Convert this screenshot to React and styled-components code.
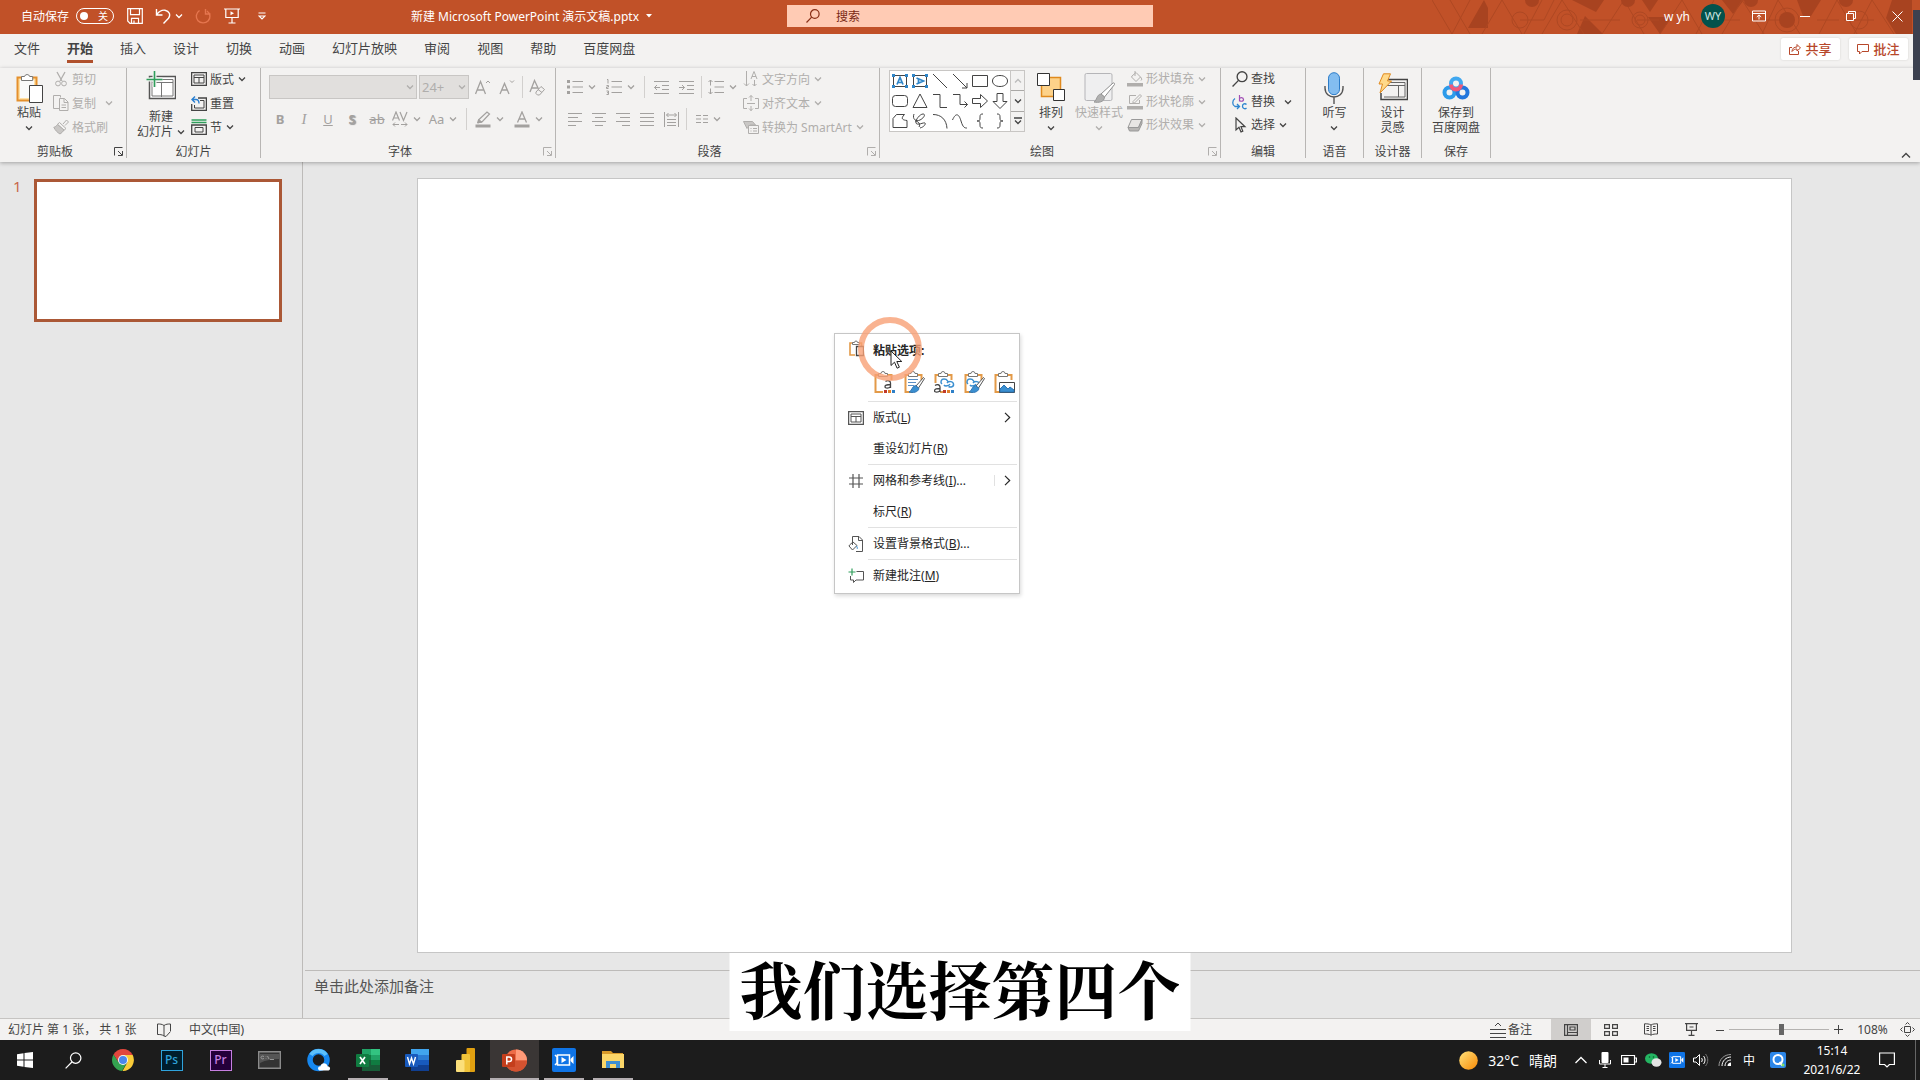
import { useState } from "react";
import styled, { createGlobalStyle, css } from "styled-components";

const INK = "#444444";
const DIM = "#b0aeac";
const BRAND = "#b7472a";

const Svg = ({ w = 16, h = 16, c = "currentColor", sw = 1, box, children }) => (
  <svg
    width={w}
    height={h}
    viewBox={box || `0 0 ${w} ${h}`}
    fill='none'
    stroke={c}
    strokeWidth={sw}
    aria-hidden='true'
  >
    {children}
  </svg>
);

const Chevron = () => (
  <Svg w={8} h={8} sw={1.3}>
    <path d='M1 2.5l3 3 3-3' />
  </Svg>
);

/* title bar icons */
const SaveIcon = () => (
  <Svg w={16} h={16} sw={1.2}>
    <path d='M.7.7h14.6v14.6H3L.7 13zM3.5.7v6h9v-6M4.5 15.3v-5h7v5M7 15v-2.5' />
  </Svg>
);
const UndoIcon = () => (
  <Svg w={16} h={16} sw={1.4}>
    <path d='M1.5 1v6h6M1.8 6.5C4 3.5 7 1.8 10 2.2c4.5.7 5.8 5 3.5 8L8.500 15.5' />
  </Svg>
);
const RedoIcon = () => (
  <Svg w={16} h={16} sw={1.4}>
    <path d='M10.5 1v5h5M12 3c3.5 2.5 4 7 1 10-2.500 2.500-7.500 2.500-10-.2C.3 9.800.8 5 4.500 2.500' />
  </Svg>
);
const PresentIcon = () => (
  <Svg w={16} h={16} sw={1.2}>
    <path d='M0 1h16M1.8 1v8.5h12.4V1M8 9.5V15M4.500 15h7' />
    <path d='M6.5 3.2v4l3.5-2z' fill='currentColor' stroke='none' />
  </Svg>
);
const MoreIcon = () => (
  <Svg w={8} h={8} sw={1.2}>
    <path d='M.5 1h7M1 4h6L4 7z' />
  </Svg>
);
const CaretIcon = () => (
  <Svg w={6} h={4}>
    <path d='M0 0h6L3 3.5z' fill='currentColor' stroke='none' />
  </Svg>
);
const SearchIcon = ({ size = 14, sw = 1.2 }) => (
  <Svg w={size} h={size} box='0 0 14 14' sw={sw}>
    <circle cx='8.8' cy='5' r='4.3' />
    <path d='M5.7 8.2L.5 13.500' />
  </Svg>
);
const RibbonModeIcon = () => (
  <Svg w={14} h={12}>
    <path d='M.5 1h13v10H.5zM.5 3.5h13M7 9.5V5M4.8 7L7 4.900 9.200 7' />
  </Svg>
);
const MinIcon = () => (
  <Svg w={10} h={10}>
    <path d='M0 5.5h10' />
  </Svg>
);
const RestoreIcon = () => (
  <Svg w={10} h={10}>
    <path d='M.5 2.5h7v7h-7zM2.5 2.5v-2h7v7h-2' />
  </Svg>
);
const CloseIcon = () => (
  <Svg w={11} h={11}>
    <path d='M.5.5l10 10M10.5.5l-10 10' />
  </Svg>
);

const Pattern = () => (
  <Svg w={480} h={34} c='#ae4823'>
    <path
      stroke='none'
      fill='#a84320'
      d='M52 0l-8 14-8 14h20V8zM140 0h32l-8 12zM153 16l18 18h-26zM216 17h24l-12 17zM226 0l-8 12-8-12zM290 0h22l-11 14zM365 0h24l-10 16h-8zM460 0h20v34h-16l-10-16z'
    />
    <path d='M0 0l20 34M18 0l20 34M38 0L20 34M70 0L50 34M70 0l20 34M88 20h24M110 0L92 34M112 20l10-20M130 0l-20 34M130 0l22 34M148 20h40M192 0l-22 34M192 0l20 34M205 20h22M250 0l-22 34M250 0l20 34M282 0l-18 34M270 20h38M310 0l-20 34M310 0l22 34M332 20h28M346 0l-16 34M346 0l22 34M385 20h22M405 0l-18 34M405 0l20 34M412 20h30M440 0l-18 34M440 0l22 34' />
    <circle cx='88' cy='20' r='8' />
    <circle cx='135' cy='20' r='10' />
    <circle cx='135' cy='20' r='6' />
    <circle cx='208' cy='20' r='8' />
    <circle cx='208' cy='20' r='5' />
    <circle cx='355' cy='20' r='12' />
    <circle cx='427' cy='20' r='9' />
    <g fill='#a84320' stroke='none'>
      <circle cx='100' cy='0' r='7' />
      <circle cx='196' cy='0' r='7' />
      <circle cx='319' cy='0' r='7' />
      <circle cx='355' cy='20' r='8' />
      <circle cx='414' cy='0' r='7' />
    </g>
  </Svg>
);

/* ribbon icons */
const PasteBig = () => (
  <Svg w={28} h={31}>
    <path d='M2.5 5.5h19v23h-19z' fill='#ffe1a5' stroke='#e5902c' strokeWidth='2' />
    <path d='M5 8h14v18H5z' fill='#fafafa' stroke='none' />
    <path d='M6.5 8.5V4.5h3a2.7 2.7 0 015.2 0h3v4z' fill='#fff' stroke='#777' />
    <path d='M14.5 13.5h13v17h-13z' fill='#fff' stroke='#444' />
  </Svg>
);
const CutIcon = () => (
  <Svg>
    <path d='M4 1l5 9M12 1L7 10' strokeWidth='1.3' />
    <circle cx='5' cy='12.5' r='2.4' />
    <circle cx='11' cy='12.5' r='2.4' />
  </Svg>
);
const CopyIcon = () => (
  <Svg>
    <path d='M6 13.5H.5V.5h7v2M6.5 3.5h5l3.5 3.5v8.5H6.500zM11 3.5v4h4M8.500 10h4.500M8.500 12.500h4.500' />
  </Svg>
);
const BrushIcon = () => (
  <Svg>
    <path d='M10 5l3.5-4 2 2L12 6.5M6.5 3.5l6.5 6-2 1.8-6.5-6z' />
    <path d='M4.5 5.5C3.5 7 2 8 .8 8.3c1.5 3 3.5 5.2 6.2 6.7 1.5-1 3-2.2 4-4z' fill='#c9c7c5' />
  </Svg>
);
const NewSlideIcon = () => (
  <Svg w={30} h={29}>
    <path d='M3.5 5.5h26v22h-26z' stroke='#555' strokeWidth='1.5' fill='#fff' />
    <path d='M6 11.5h21M15.5 11.5V26M6 8.5h21V25H6z' stroke='#777' />
    <path d='M8.5 0v16M.5 8.5h16' stroke='#f3f2f1' strokeWidth='4' />
    <path d='M8.5 0v16M.5 8.5h16' stroke='#2f9e5b' strokeWidth='1.6' />
  </Svg>
);
const LayoutIcon = () => (
  <Svg h={14}>
    <path d='M.6.6h14.8v12.8H.6z' strokeWidth='1.3' />
    <path d='M3 3h10v8H3zM3 5.5h10M8 5.5V11' />
  </Svg>
);
const ResetIcon = () => (
  <Svg h={15}>
    <path d='M7 2h8.4v12.4H.7V8' strokeWidth='1.3' />
    <path d='M9 4.5h4v7.5H3.5V9' />
    <path d='M4 .5L1 3.5l3 3M1 3.5h4c2 0 3 1.5 3 4' stroke='#2b7fd0' strokeWidth='1.4' />
  </Svg>
);
const SectionIcon = () => (
  <Svg>
    <path d='M.5 1h15M.5 3.5h15' stroke='#2f9e5b' strokeWidth='1.4' />
    <path d='M.7 6h14.6v9.5H.7z' strokeWidth='1.3' />
    <path d='M4 8.5h8v4.5H4z' />
  </Svg>
);
const ClearFmtIcon = () => (
  <Svg w={16} h={17}>
    <path d='M1 13L5.5 1.5 9.5 10M2.5 9h6' strokeWidth='1.3' />
    <path d='M7 13l5-5.5 3.5 3-5 5.5H8.5L7 14.5z' fill='#f3f2f1' />
    <path d='M9 10.5l4 3' />
  </Svg>
);
const GrowIcon = ({ down }) => (
  <Svg w={16} h={16}>
    <path d={down ? "M1 15L5.5 4.5 10 15M2.8 11h5.5" : "M.5 15L5.5 2.5 10.5 15M2.5 11h6"} strokeWidth='1.3' />
    <path d={down ? "M11 1.5l2 2 2-2" : "M11 4l2-2 2 2"} />
  </Svg>
);
const SpacingIcon = () => (
  <Svg w={16} h={16}>
    <path d='M.5 9.5L4 1l3.5 8.5M2 7h4M8 1l3.5 8.5L15 1' strokeWidth='1.2' />
    <path d='M1 13.5h6M3 11.5l-2 2 2 2M9 13.5h6M13 11.5l2 2-2 2' />
  </Svg>
);
const HighlightIcon = () => (
  <Svg w={16} h={17}>
    <path d='M4 8.5L12 1l2.5 2L7 11l-3.5.5z' strokeWidth='1.2' />
    <path d='M3.5 8.5L7 11l-4.5 1z' fill='currentColor' />
    <path d='M.5 13.5h15v3H.5z' fill='currentColor' stroke='none' />
  </Svg>
);
const FontColorIcon = () => (
  <Svg w={16} h={17}>
    <path d='M3.5 11.5L8 1l4.5 10.5M5 8h6' strokeWidth='1.3' />
    <path d='M.5 13.5h15v3H.5z' fill='currentColor' stroke='none' />
  </Svg>
);
const BulletsIcon = () => (
  <Svg>
    <path d='M5.5 2.5H16M5.5 8H16M5.5 13.5H16' />
    <path d='M0 1h3v3H0zM0 6.5h3v3H0zM0 12h3v3H0z' fill='currentColor' stroke='none' />
  </Svg>
);
const NumbersIcon = () => (
  <Svg>
    <path d='M5.5 2.5H16M5.5 8H16M5.5 13.5H16M1 .5h1v4M.5 6.5h2V8h-2v1.500h2M.5 12h2v3.500h-2M1 13.700h1.500' />
  </Svg>
);
const IndentIcon = ({ out }) => (
  <Svg w={15} h={15}>
    <path d='M0 1.5h15M8 5.5h7M8 9.5h7M0 13.5h15' />
    <path d={out ? "M6 7.5H.5M3 5L.5 7.5 3 10" : "M0 7.5h5.5M3 5l2.5 2.5L3 10"} />
  </Svg>
);
const LineSpaceIcon = () => (
  <Svg>
    <path d='M6.5 2.5H16M6.5 8H16M6.5 13.5H16M2.5 1v5.5M.5 3l2-2 2 2M2.5 15V9.5M.5 13l2 2 2-2' />
  </Svg>
);
const alignPaths = {
  left: "M0 1.5h14M0 5.5h10M0 9.5h14M0 13.5h8",
  center: "M0 1.5h14M3 5.5h8M0 9.5h14M3 13.5h8",
  right: "M0 1.5h14M4 5.5h10M0 9.5h14M6 13.5h8",
  justify: "M0 1.5h14M0 5.5h14M0 9.5h14M0 13.5h14",
  spread: "M.5 0v15M14.5 0v15M2.5 3h10M4.5 1l-2 2 2 2M10.5 1l2 2-2 2M3 7.5h9M3 10.5h9M3 13.5h9",
};
const AlignIcon = ({ kind }) => (
  <Svg w={15} h={15}>
    <path d={alignPaths[kind]} />
  </Svg>
);
const ColumnsIcon = () => (
  <Svg w={12} h={12}>
    <path d='M0 2.5h5M0 6h5M0 9.5h5M7 2.5h5M7 6h5M7 9.5h5' />
  </Svg>
);
const TextDirIcon = () => (
  <Svg>
    <path d='M3.5 0v15M1 12.5L3.5 15 6 12.5M11.5 9v6M9.5 13l2 2 2-2M8 8l3-7.5L14 8M9 5.5h4' />
  </Svg>
);
const AlignTextIcon = () => (
  <Svg>
    <path d='M4 3.5H.5v10H4M12 3.5h3.5v10H12M8 .5V6M6 2.5l2-2 2 2M8 16v-5M6 13.5l2 2 2-2M4 8.5h8' />
  </Svg>
);
const SmartArtIcon = () => (
  <Svg>
    <path d='M.5 2.5h9l3 3.5H7L4 9.5z' fill='#c9c7c5' />
    <path d='M5.5 6.5h10v8h-10zM7.5 9.5h1M7.5 12h1M10 9.5h4M10 12h4' fill='#f3f2f1' />
  </Svg>
);

const shapePaths = [
  "M3 3l14 14",
  "M3 3l14 14M17 12v5h-5",
  "M2.5 4.5h15v11h-15z",
  "M10 4.5c5 0 7.5 2.7 7.5 5.5s-2.5 5.5-7.5 5.5S2.500 12.800 2.500 10 5 4.500 10 4.500z",
  "M5.5 4.5h9a3 3 0 013 3v5a3 3 0 01-3 3h-9a3 3 0 01-3-3v-5a3 3 0 013-3z",
  "M10 3L17 16.5H3z",
  "M3 3.5h7v13h7",
  "M3 3.5h7v10h7.5M14.5 10.5l3 3-3 3",
  "M2.5 7.5h8v-4L17.5 10l-7 6.5v-4h-8z",
  "M7 2.5h6v8h4L10 17.5 3 10.5h4z",
  "M3 16.5v-9l3.500-4h8C10 8 13 9 17 9.5v7z",
  "M4 3c-2 5 2 8 6 6s6-6 3-6-8 6-7 9 8-1 9 0-1 4-5 5M5 10c3 0 6 3 4 6",
  "M3 3.5c8 0 13.5 5 14 14",
  "M2.5 9C6 1 9 3 11 10s4 7 6 7",
  "M13 3c-3 0-3 1-3 4s-1 3-3 3c2 0 3 0 3 3s0 4 3 4",
  "M7 3c3 0 3 1 3 4s1 3 3 3c-2 0-3 0-3 3s0 4-3 4",
];
const TextBoxShape = ({ turned }) => (
  <Svg w={20} h={20} c='#444'>
    <path d='M3.5 4.5h13v11h-13z' />
    <path
      d='M7 13.5L10 6.5l3 7M8 11.5h4'
      stroke='#2f86c9'
      strokeWidth='1.7'
      transform={turned ? "rotate(90 10 10)" : undefined}
    />
    <path
      d='M2 3h3v3H2zM15 3h3v3h-3zM2 14h3v3H2zM15 14h3v3h-3z'
      fill='#2f86c9'
      stroke='none'
    />
  </Svg>
);
const ArrangeIcon = () => (
  <Svg w={28} h={29}>
    <path d='M4.5 4.5h19v19h-19z' fill='#fdd28a' stroke='#e08a1e' strokeWidth='1.5' />
    <path d='M.5.5h12v12H.5zM16.5 16.5h11v11h-11z' fill='#fff' stroke='#333' />
  </Svg>
);
const QuickStyleIcon = () => (
  <Svg w={31} h={30}>
    <path d='M1 2A1.5 1.5 0 012.5.5h24A1.5 1.5 0 0128 2v24a1.5 1.5 0 01-1.5 1.5h-24A1.5 1.5 0 011 26z' fill='#efeff0' stroke='#b5b5b8' />
    <path d='M17 21L29 10c1-.5 2 .5 1.5 1.5L20.5 24z' fill='#fff' stroke='#8e8e8e' />
    <path d='M17 21l3.5 3c0 5-6 6-10.5 5 3-1.5 2.5-7.5 7-8z' fill='#b0b0b0' stroke='#999' />
  </Svg>
);
const FillIcon = () => (
  <Svg>
    <path d='M5 5l4-3.5L13.5 6 9 10.5 4.5 6zM8 0v5' />
    <path d='M13.5 6c1.5 1.5 1.5 3 .5 3.5' />
    <path d='M0 12h16v3.5H0z' fill='currentColor' stroke='none' />
  </Svg>
);
const OutlineIcon = () => (
  <Svg>
    <path d='M9 1.5H2.5v8h10V6M6 7.5L13 .5 14.5 2l-7 7H6z' />
    <path d='M0 12h16v3.5H0z' fill='currentColor' stroke='none' />
  </Svg>
);
const EffectIcon = () => (
  <Svg c='#999'>
    <path d='M4.5 2.5H15l-3.5 8H1z' fill='#e8e6e4' />
    <path d='M1 10.5h10.5L15 2.5v4l-3.5 7.5h-9z' fill='#b8b6b4' />
  </Svg>
);
const ReplaceIcon = () => (
  <Svg>
    <path d='M7.5 1v6.5M7.5 5c0-2 4-2 4 .5s-4 2-4 .5' stroke='#a04fb5' strokeWidth='1.2' />
    <path d='M14.5 10.5c-1.5-1.5-4-.5-4 1.7s2.5 3.3 4 1.8M3 4.500C0 6.5 0 11 3 12.5h4M5 10l2.5 2.5L5 15' stroke='#2f86d0' strokeWidth='1.3' />
  </Svg>
);
const PointerIcon = () => (
  <Svg sw={1.2}>
    <path d='M4 1v12l3-2.7L9 15l1.8-.8L9 9.7h4z' />
  </Svg>
);
const MicIcon = () => (
  <Svg w={20} h={32}>
    <path d='M1 14v2c0 12 18 12 18 0v-2M10 25v7' stroke='#555' strokeWidth='1.4' />
    <rect x='4.5' y='.7' width='11' height='22' rx='5.5' fill='#83bdf0' stroke='#2b7cc9' />
  </Svg>
);
const DesignIcon = () => (
  <Svg w={30} h={29}>
    <path d='M7 6.5h22.5v20H3V20' stroke='#444' strokeWidth='1.5' />
    <path d='M9 9.5h18V24H6M9 12.5h18M20.5 12.5V24' stroke='#666' />
    <path d='M5.5.8h7L9.5 8h4L2 20l2.5-9H1z' fill='#ffd98a' stroke='#e08a1e' />
  </Svg>
);
const CloudDiskIcon = () => (
  <Svg w={28} h={24}>
    <circle cx='7.5' cy='16.5' r='5' stroke='#2d9bea' strokeWidth='4' />
    <circle cx='20.5' cy='16.5' r='5' stroke='#2277dd' strokeWidth='4' />
    <circle cx='14' cy='7.5' r='5' stroke='#40a8f0' strokeWidth='4' />
    <path d='M9 8.5a5 5 0 0010 0' stroke='#f0587a' strokeWidth='4' />
  </Svg>
);
const ShareIcon = () => (
  <Svg w={12} h={12}>
    <path d='M3 4.5H.5v7h9V8M3 8.5c0-3 2-4.5 5-4.5V1.5L11.5 5 8 8V6C6 6 4.5 6.5 3 8.5z' />
  </Svg>
);
const CommentIcon = () => (
  <Svg w={12} h={12}>
    <path d='M.5 1.5h11v7H5L2.5 11V8.500h-2z' />
  </Svg>
);
const LauncherIcon = () => (
  <Svg w={9} h={9}>
    <path d='M.5 8.5v-8h8M4 4l4 4M8.5 4v4.5H4' />
  </Svg>
);

/* context menu icons */
const Board = ({ children }) => (
  <Svg w={21} h={24}>
    <path d='M6 5H1.5v17H9M14 5h3.5v5' stroke='#e39a48' strokeWidth='2' />
    <path d='M4.5 6.5v-3H7a2 2 0 014 0h2.5v3z' stroke='#777' fill='#fff' />
    {children}
  </Svg>
);
const PasteSmall = () => (
  <Svg w={15} h={17}>
    <path d='M4 3H1v12h5M10 3h2.5v3' stroke='#e39a48' strokeWidth='1.6' />
    <path d='M3.5 4.5v-2h2a1.5 1.5 0 013 0h2v2z' stroke='#777' fill='#fff' />
    <path d='M7.5 6.5h7v9h-7z' stroke='#444' strokeWidth='1.3' fill='#fff' />
  </Svg>
);
const Swatches = ({ x = 10 }) => (
  <g stroke='none'>
    <path d={`M${x} 20h3v3h-3z`} fill='#c0392b' />
    <path d={`M${x + 4} 20h3v3h-3z`} fill='#e0812a' />
    <path d={`M${x + 8} 20h3v3h-3z`} fill='#2e80c8' />
  </g>
);
const LetterA = ({ x }) => (
  <path
    d={`M${x} 11.5c2-1.5 5-1 5 1.5v5M${x + 5} 14.5c-3 0-5.5.5-5.5 2.2 0 2 4 2 5.5-.2`}
    stroke='#444'
    strokeWidth='1.3'
  />
);
const Links = ({ y = 10 }) => (
  <path
    d={`M8 ${y + 5}c-2-1.5-1-5 2-5s3 1 4 2.5M13 ${y + 4}c1.5-2 6-2 6.5 1s-3 3.5-5 2.5M16 ${y + 5}c-1 2-5 2.5-6 1`}
    stroke='#3a8fd0'
    strokeWidth='1.5'
  />
);
const BlueBrush = () => (
  <g>
    <path d='M12 16l7.5-8.5 1 1L14.5 18z' stroke='#555' fill='#fff' />
    <path d='M11.5 15.5l3.5 3c-1 4-6 4.5-10 3.5 3-1 3-6 6.5-6.5z' fill='#3a8fd0' stroke='#2b74b5' />
  </g>
);
const PasteTheme = () => (
  <Board>
    <LetterA x={11.5} />
    <Swatches />
  </Board>
);
const PasteKeep = () => (
  <Board>
    <path d='M4 9.5h10M4 12.5h8M4 15.5h6' stroke='#5b8fc4' />
    <BlueBrush />
  </Board>
);
const PasteLinkTheme = () => (
  <Board>
    <path d='M0 13h6v11H0z' fill='#fff' stroke='none' />
    <g transform='translate(0 4)'>
      <LetterA x={1} />
    </g>
    <Links y={9} />
    <Swatches x={9} />
  </Board>
);
const PasteLinkKeep = () => (
  <Board>
    <g transform='translate(-4 -1)'>
      <Links />
    </g>
    <BlueBrush />
  </Board>
);
const PastePicture = () => (
  <Board>
    <path d='M5.500 12.5h15v10h-15z' fill='#fff' stroke='#444' />
    <path d='M6 22v-3l4-4 4 4 2-2 4 3v2z' fill='#3a8fd0' stroke='#2b74b5' />
  </Board>
);
const GridIcon = () => (
  <Svg sw={1.2}>
    <path d='M5 1v14M11 1v14M1 5h14M1 11h14' />
  </Svg>
);
const BackdropIcon = () => (
  <Svg>
    <path d='M4.5 5V.5H11L14.500 4v11.5H8M10.500.500v4h4' />
    <path d='M1.5 9L5 6l4 3.5L4.500 14 1 10zM4.500 5v4' />
    <path d='M8.5 10c1 1.5 1 2.5.5 3' stroke='#3a8fd0' />
  </Svg>
);
const NewCommentIcon = () => (
  <Svg>
    <path d='M8.5 3.5h7V12H8l-2.500 2.500V12h-3V8' />
    <path d='M4 .5v7M.5 4h7' stroke='#2f9e5b' strokeWidth='1.2' />
  </Svg>
);
const MenuArrow = () => (
  <Svg w={7} h={11} sw={1.2}>
    <path d='M1 .8l4.700 4.700L1 10.200' />
  </Svg>
);

/* status bar icons */
const BookIcon = () => (
  <Svg w={14} h={14}>
    <path d='M7 2.5C5 1 3 1 .5 1v10.500c2.500 0 4.500 0 6.500 1.500V2.500C9 1 11 1 13.500 1v7M7 13l2 .5 4.500-5' />
  </Svg>
);
const NotesIcon = () => (
  <Svg w={16} h={16}>
    <path d='M0 7.5h16M0 11.5h16M0 15.5h16M5 4l3-3 3 3' />
  </Svg>
);
const NormalIcon = () => (
  <Svg w={14} h={12} sw={1.2}>
    <path d='M.6.6h12.800v10.800H.6zM3.500.6v10.800M3.500 8.500h10M6 3h5v3H6z' />
  </Svg>
);
const SorterIcon = () => (
  <Svg w={14} h={12} sw={1.2}>
    <path d='M.6.6h4.800v3.800H.6zM8.600.6h4.800v3.800H8.600zM.6 7.600h4.800v3.800H.6zM8.600 7.600h4.800v3.800H8.600z' />
  </Svg>
);
const ReadIcon = () => (
  <Svg w={14} h={13}>
    <path d='M7 2C5 .8 3 .8.5.8V11c2.500 0 4.500 0 6.500 1.200 2-1.200 4-1.200 6.500-1.200V.8C11 .8 9 .8 7 2zM7 2v10M2.500 3.500H5M2.500 5.500H5M2.500 7.500H5M9 3.500h2.500M9 5.500h2.500M9 7.500h2.500' />
  </Svg>
);
const ShowIcon = () => (
  <Svg w={13} h={13} sw={1.2}>
    <path d='M0 .6h13M1.600.6v6.800h9.800V.6M6.500 7.500v5M3.500 12.400h6M4.500 4h4' />
  </Svg>
);
const FitIcon = () => (
  <Svg w={15} h={15}>
    <path d='M4.5 4.5h6v6h-6zM5.5 2.5l2-2 2 2M5.5 12.5l2 2 2-2M2.5 5.5l-2 2 2 2M12.5 5.5l2 2-2 2' />
  </Svg>
);

/* taskbar icons */
const WinLogo = () => (
  <Svg w={16} h={16}>
    <path d='M0 2.2l6.5-.9v6.2H0zM7.5 1.100L16 0v7.500H7.500zM0 8.500h6.500v6.200L0 13.800zM7.500 8.500H16V16l-8.500-1.100z' fill='#fff' stroke='none' />
  </Svg>
);
const ChromeLogo = () => (
  <Svg w={22} h={22}>
    <g stroke='none'>
      <path d='M11 11L1.5 5.5a11 11 0 0119 0z' fill='#e1473d' />
      <path d='M11 6h9.800l-.3-.5h-19l5 8z' fill='#e1473d' />
      <path d='M6.7 13.5l-5.200-8A11 11 0 0010 22l5-8.500z' fill='#34a350' />
      <path d='M15.3 13.5L10.500 22a11 11 0 0010.200-16H11z' fill='#f9cb38' />
      <circle cx='11' cy='11' r='5' fill='#f4f4f4' />
      <circle cx='11' cy='11' r='4' fill='#4a86ec' />
    </g>
  </Svg>
);
const CmdLogo = () => (
  <Svg w={23} h={18}>
    <path d='M.7.7h21.6v16.6H.7z' fill='#343434' stroke='#8b8b8b' strokeWidth='1.4' />
    <path d='M2 3h19v5C14 8 8 9 2 12z' fill='#555' stroke='none' />
    <path d='M6 5.5c-2-1-3 0-3 1s1 2 3 1M8 5v.5M8 7.5V8M9.5 5L11 8M12 8.500h4' stroke='#aaa' strokeWidth='.8' />
  </Svg>
);
const CloudQLogo = () => (
  <Svg w={24} h={24}>
    <circle cx='11.5' cy='12' r='8.5' stroke='#1687ee' strokeWidth='5.5' />
    <path d='M4 7a9 9 0 0115 0' stroke='#5cc0fb' strokeWidth='4' />
    <path d='M13.5 22.5c-3 0-3.500-4 0-4.300 1-3.800 6-3.800 7 0 3.500.3 3.500 4.300 0 4.300z' fill='#fff' stroke='none' />
  </Svg>
);
const ExcelLogo = () => (
  <Svg w={24} h={22}>
    <g stroke='none'>
      <path d='M6 0h9v6H6z' fill='#21a366' />
      <path d='M15 0h9v6h-9z' fill='#33c481' />
      <path d='M6 6h9v5H6z' fill='#107c41' />
      <path d='M15 6h9v5h-9z' fill='#21a366' />
      <path d='M6 11h18v11H6z' fill='#185c37' />
      <path d='M15 11h9v5h-9z' fill='#107c41' />
      <rect y='5' width='13' height='13' rx='1' fill='#107c41' />
    </g>
    <path d='M4 8l5 7M9 8l-5 7' stroke='#fff' strokeWidth='1.7' />
  </Svg>
);
const WordLogo = () => (
  <Svg w={24} h={22}>
    <g stroke='none'>
      <path d='M6 0h18v6H6z' fill='#41a5ee' />
      <path d='M6 6h18v5H6z' fill='#2b7cd3' />
      <path d='M6 11h18v5H6z' fill='#185abd' />
      <path d='M6 16h18v6H6z' fill='#103f91' />
      <rect y='5' width='13' height='13' rx='1' fill='#185abd' />
    </g>
    <path d='M2.5 8l2 7 2-6 2 6 2-7' stroke='#fff' strokeWidth='1.4' />
  </Svg>
);
const PowerBiLogo = () => (
  <Svg w={19} h={24}>
    <g stroke='none'>
      <rect x='10.5' width='8.5' height='24' rx='1' fill='#e0a010' />
      <rect x='5.5' y='6' width='8.5' height='18' rx='1' fill='#f0c33a' />
      <rect y='12' width='8.5' height='12' rx='1' fill='#fbdf7a' />
    </g>
  </Svg>
);
const PowerPointLogo = () => (
  <Svg w={25} h={23}>
    <g stroke='none'>
      <circle cx='14' cy='11.5' r='11' fill='#ed6c47' />
      <path d='M14 .5a11 11 0 0111 11H14z' fill='#ff9a78' />
      <path d='M3 11.5h22a11 11 0 01-22 0z' fill='#d35230' />
      <rect y='5' width='13' height='13' rx='1' fill='#c43e1c' />
    </g>
    <path d='M4.8 15.5V8h2.500c3 0 3 4.500 0 4.500H5' stroke='#fff' strokeWidth='1.5' />
  </Svg>
);
const RecorderLogo = ({ size = 24 }) => (
  <Svg w={size} h={size} box='0 0 24 24'>
    <rect width='24' height='24' rx='2' fill='#0f74e6' stroke='none' />
    <path d='M3 7l2 2v6l-2 2M5.5 7h12v10h-12z' stroke='#fff' strokeWidth='1.5' />
    <path d='M9.5 9v6l5-3zM18.5 11l3-3v8l-3-3z' fill='#fff' stroke='none' />
  </Svg>
);
const FolderLogo = () => (
  <Svg w={22} h={20}>
    <g stroke='none'>
      <path d='M0 1h9l2 2h10v5H0z' fill='#d89a2a' />
      <path d='M0 4h22v14H0z' fill='#fbd668' />
      <path d='M4 18v-7h14v7h-4v-4H8v4z' fill='#3f8fd2' />
    </g>
  </Svg>
);
const SunIcon = () => (
  <Svg w={19} h={19}>
    <defs>
      <linearGradient id='sun' x1='0' y1='0' x2='1' y2='1'>
        <stop offset='0' stopColor='#ffe27a' />
        <stop offset='1' stopColor='#f98a05' />
      </linearGradient>
    </defs>
    <circle cx='9.5' cy='9.5' r='9.3' fill='url(#sun)' stroke='none' />
  </Svg>
);
const TrayUp = () => (
  <Svg w={12} h={8} sw={1.3}>
    <path d='M.5 7L6 1.500 11.500 7' />
  </Svg>
);
const TrayMic = () => (
  <Svg w={12} h={16}>
    <rect x='2.5' width='7' height='11' rx='1' fill='#fff' stroke='none' />
    <path d='M.5 8v4h11V8M6 12v3.5M3.5 15.5h5' />
  </Svg>
);
const TrayBattery = () => (
  <Svg w={16} h={10}>
    <path d='M.5.5h13v9H.5zM14 3h1.5v4H14' strokeWidth='1.2' />
    <path d='M2.5 2.5h5v5h-5z' fill='#fff' stroke='none' />
  </Svg>
);
const TrayWechat = () => (
  <Svg w={17} h={14}>
    <g stroke='none'>
      <ellipse cx='6.5' cy='5.5' rx='6.5' ry='5.3' fill='#24b562' />
      <ellipse cx='11.5' cy='9.5' rx='5' ry='4.2' fill='#e4e4e4' />
      <circle cx='4.5' cy='4' r='.8' fill='#0c5a2c' />
      <circle cx='8.5' cy='4' r='.8' fill='#0c5a2c' />
    </g>
  </Svg>
);
const TrayVolume = () => (
  <Svg w={16} h={14}>
    <path d='M.5 5H3l3.500-3.500v11L3 9H.5zM8.500 5c1 1.200 1 2.800 0 4M10.500 3c2 2.400 2 5.600 0 8' />
    <path d='M12.500 1c3 3.500 3 8.500 0 12' stroke='#777' />
  </Svg>
);
const TrayWifi = () => (
  <Svg w={14} h={14}>
    <path d='M1 13C1 6.5 6 1.5 13 1.5' stroke='#999' />
    <path d='M4 13c0-5 4-9 9-9M7 13c0-3.5 2.5-6 6-6' />
    <path d='M9.5 13c0-2 1.5-3.5 3.5-3.5V13z' fill='#fff' stroke='none' />
  </Svg>
);
const TrayQ = () => (
  <Svg w={16} h={16}>
    <rect width='16' height='16' rx='2' fill='#2c86e8' stroke='none' />
    <circle cx='8' cy='7.5' r='4.5' stroke='#fff' strokeWidth='2' />
    <path d='M9.5 10l3 3.5' stroke='#fff' strokeWidth='2' />
    <circle cx='13' cy='13' r='1.5' fill='#7fe06a' stroke='none' />
  </Svg>
);
const TrayNotice = () => (
  <Svg w={16} h={16}>
    <path d='M.6 1h14.8v11.5h-5L8 15l-2.4-2.5h-5z' strokeWidth='1.2' />
  </Svg>
);

const tabs = ["文件", "开始", "插入", "设计", "切换", "动画", "幻灯片放映", "审阅", "视图", "帮助", "百度网盘"];

const pasteOptions = [
  ["使用目标主题", PasteTheme],
  ["保留源格式", PasteKeep],
  ["链接并使用目标主题", PasteLinkTheme],
  ["链接并保留源格式", PasteLinkKeep],
  ["图片", PastePicture],
];

const tasks = [
  { name: "开始菜单", icon: <WinLogo /> },
  { name: "搜索", icon: <SearchIcon size={17} sw={1} /> },
  { name: "Chrome", icon: <ChromeLogo /> },
  { name: "Photoshop", icon: "Ps", color: "#2fa3dc", bg: "#001d2c" },
  { name: "Premiere", icon: "Pr", color: "#c67fe0", bg: "#24003a" },
  { name: "命令提示符", icon: <CmdLogo /> },
  { name: "浏览器", icon: <CloudQLogo /> },
  { name: "Excel", icon: <ExcelLogo />, open: true },
  { name: "Word", icon: <WordLogo /> },
  { name: "Power BI", icon: <PowerBiLogo /> },
  { name: "PowerPoint", icon: <PowerPointLogo />, open: true, active: true },
  { name: "录屏", icon: <RecorderLogo />, open: true },
  { name: "文件资源管理器", icon: <FolderLogo />, open: true },
];

const Small = ({ icon, text, arrow, dim, gap }) => (
  <SmallButton $dim={dim} $gap={gap} disabled={dim}>
    {icon}
    <span>{text}</span>
    {arrow && <Chevron />}
  </SmallButton>
);

const RibbonGroup = ({ name, width, pad, launcher, dim, center, children }) => (
  <Group $width={width}>
    <GroupBody $pad={pad} $center={center}>
      {children}
    </GroupBody>
    <GroupFoot>
      <span>{name}</span>
      {launcher && (
        <Launcher $dim={dim} aria-label={name + "选项"}>
          <LauncherIcon />
        </Launcher>
      )}
    </GroupFoot>
  </Group>
);

const TitleBar = () => (
  <TitleRow>
    <PatternLayer>
      <Pattern />
    </PatternLayer>
    <TitleLeft>
      <AutoSave>
        自动保存
        <Pill>
          <input type='checkbox' />
          <span>关</span>
        </Pill>
      </AutoSave>
      <BarButton $w={26} aria-label='保存'><SaveIcon /></BarButton>
      <BarButton $w={42} aria-label='撤消'><UndoIcon /><Chevron /></BarButton>
      <BarButton $w={26} $faint aria-label='恢复'><RedoIcon /></BarButton>
      <BarButton $w={32} aria-label='从头放映'><PresentIcon /></BarButton>
      <BarButton $w={28} aria-label='自定义快速访问工具栏'><MoreIcon /></BarButton>
      <FileName>
        新建 Microsoft PowerPoint 演示文稿.pptx
        <CaretIcon />
      </FileName>
    </TitleLeft>
    <SearchBox>
      <SearchIcon />
      <input type='text' placeholder='搜索' />
    </SearchBox>
    <TitleRight>
      <span>w yh</span>
      <Avatar>WY</Avatar>
      <BarButton $w={46} aria-label='功能区显示选项'><RibbonModeIcon /></BarButton>
      <BarButton $w={46} aria-label='最小化'><MinIcon /></BarButton>
      <BarButton $w={46} aria-label='还原'><RestoreIcon /></BarButton>
      <BarButton $w={46} aria-label='关闭'><CloseIcon /></BarButton>
    </TitleRight>
  </TitleRow>
);

const FontGroup = () => (
  <RibbonGroup name='字体' width={295} pad={8} launcher dim>
    <Rows>
      <ToolRow>
        <Combo $w={148}>
          <select aria-label='字体' disabled>
            <option></option>
          </select>
          <Chevron />
        </Combo>
        <Combo $w={50}>
          <select aria-label='字号' disabled>
            <option>24+</option>
          </select>
          <Chevron />
        </Combo>
        <Tool $w={24} disabled aria-label='增大字号'><GrowIcon /></Tool>
        <Tool $w={24} disabled aria-label='减小字号'><GrowIcon down /></Tool>
        <Split />
        <Tool $w={22} disabled aria-label='清除格式'><ClearFmtIcon /></Tool>
      </ToolRow>
      <ToolRow>
        <Tool $w={22} disabled><b>B</b></Tool>
        <Tool $w={26} disabled><SerifI>I</SerifI></Tool>
        <Tool $w={22} disabled><u>U</u></Tool>
        <Tool $w={26} disabled><Shadowed>S</Shadowed></Tool>
        <Tool $w={24} disabled><s>ab</s></Tool>
        <Tool $w={34} disabled aria-label='字符间距'><SpacingIcon /><Chevron /></Tool>
        <Tool $w={40} disabled>Aa<Chevron /></Tool>
        <Split />
        <Tool $w={38} disabled aria-label='突出显示'><HighlightIcon /><Chevron /></Tool>
        <Tool $w={40} disabled aria-label='字体颜色'><FontColorIcon /><Chevron /></Tool>
      </ToolRow>
    </Rows>
  </RibbonGroup>
);

const ParagraphGroup = () => (
  <RibbonGroup name='段落' width={324} pad={7} launcher dim>
    <Rows $w={180}>
      <ToolRow>
        <Tool $w={36} disabled aria-label='项目符号'><BulletsIcon /><Chevron /></Tool>
        <Tool $w={42} disabled aria-label='编号'><NumbersIcon /><Chevron /></Tool>
        <Split />
        <Tool $w={26} disabled aria-label='降低级别'><IndentIcon out /></Tool>
        <Tool $w={24} disabled aria-label='提高级别'><IndentIcon /></Tool>
        <Split />
        <Tool $w={34} disabled aria-label='行距'><LineSpaceIcon /><Chevron /></Tool>
      </ToolRow>
      <ToolRow>
        {["left", "center", "right", "justify", "spread"].map((kind) => (
          <Tool $w={24} key={kind} disabled aria-label={kind}><AlignIcon kind={kind} /></Tool>
        ))}
        <Split />
        <Tool $w={36} disabled aria-label='分栏'><ColumnsIcon /><Chevron /></Tool>
      </ToolRow>
    </Rows>
    <Stack>
      <Small dim icon={<TextDirIcon />} text='文字方向' arrow />
      <Small dim icon={<AlignTextIcon />} text='对齐文本' arrow />
      <Small dim icon={<SmartArtIcon />} text='转换为 SmartArt' arrow />
    </Stack>
  </RibbonGroup>
);

const DrawingGroup = () => (
  <RibbonGroup name='绘图' width={341} pad={9} launcher dim>
    <Gallery>
      <ShapeGrid>
        <button aria-label='文本框'><TextBoxShape /></button>
        <button aria-label='竖排文本框'><TextBoxShape turned /></button>
        {shapePaths.map((d, i) => (
          <button key={i} aria-label={"形状 " + (i + 1)}>
            <Svg w={20} h={20} c='#444'>
              <path d={d} />
            </Svg>
          </button>
        ))}
      </ShapeGrid>
      <GalleryScroll>
        <button aria-label='上一行' disabled>
          <Svg w={8} h={8} c='#bbb' sw={1.3}><path d='M1 5.5l3-3 3 3' /></Svg>
        </button>
        <button aria-label='下一行'><Chevron /></button>
        <button aria-label='其他'>
          <Svg w={8} h={8} sw={1.3}><path d='M0 1h8M1 3.5l3 3 3-3' /></Svg>
        </button>
      </GalleryScroll>
    </Gallery>
    <BigButton $w={48}>
      <BigIcon><ArrangeIcon /></BigIcon>
      <span>排列</span>
      <span><Chevron /></span>
    </BigButton>
    <BigButton $w={48} $dim disabled>
      <BigIcon><QuickStyleIcon /></BigIcon>
      <span>快速样式</span>
      <span><Chevron /></span>
    </BigButton>
    <Stack $tight>
      <Small dim icon={<FillIcon />} text='形状填充' arrow />
      <Small dim icon={<OutlineIcon />} text='形状轮廓' arrow />
      <Small dim icon={<EffectIcon />} text='形状效果' arrow />
    </Stack>
  </RibbonGroup>
);

const Ribbon = () => (
  <RibbonRow>
    <RibbonGroup name='剪贴板' width={127} pad={5} launcher>
      <BigButton $w={48}>
        <BigIcon><PasteBig /></BigIcon>
        <span>粘贴</span>
        <span><Chevron /></span>
      </BigButton>
      <Stack>
        <Small dim icon={<CutIcon />} text='剪切' />
        <Small dim icon={<CopyIcon />} text='复制' arrow gap={6} />
        <Small dim icon={<BrushIcon />} text='格式刷' />
      </Stack>
    </RibbonGroup>
    <RibbonGroup name='幻灯片' width={134} pad={4}>
      <BigButton $w={60}>
        <BigIcon $tall><NewSlideIcon /></BigIcon>
        <span>新建</span>
        <span>幻灯片 <Chevron /></span>
      </BigButton>
      <Stack>
        <Small icon={<LayoutIcon />} text='版式' arrow />
        <Small icon={<ResetIcon />} text='重置' />
        <Small icon={<SectionIcon />} text='节' arrow />
      </Stack>
    </RibbonGroup>
    <FontGroup />
    <ParagraphGroup />
    <DrawingGroup />
    <RibbonGroup name='编辑' width={85} pad={7}>
      <Stack $tight>
        <Small icon={<SearchIcon size={16} />} text='查找' />
        <Small icon={<ReplaceIcon />} text='替换' arrow gap={6} />
        <Small icon={<PointerIcon />} text='选择' arrow />
      </Stack>
    </RibbonGroup>
    <RibbonGroup name='语音' width={58} center>
      <BigButton>
        <BigIcon><MicIcon /></BigIcon>
        <span>听写</span>
        <span><Chevron /></span>
      </BigButton>
    </RibbonGroup>
    <RibbonGroup name='设计器' width={58} center>
      <BigButton>
        <BigIcon><DesignIcon /></BigIcon>
        <span>设计</span>
        <span>灵感</span>
      </BigButton>
    </RibbonGroup>
    <RibbonGroup name='保存' width={69} center>
      <BigButton>
        <BigIcon><CloudDiskIcon /></BigIcon>
        <span>保存到</span>
        <span>百度网盘</span>
      </BigButton>
    </RibbonGroup>
    <Collapse aria-label='折叠功能区'>
      <Svg w={10} h={6} sw={1.4}><path d='M1 5.5l4-4 4 4' /></Svg>
    </Collapse>
  </RibbonRow>
);

const MenuRow = ({ icon, text, hotkey, more, arrow, split }) => (
  <MenuItem role='menuitem'>
    <MenuIcon>{icon}</MenuIcon>
    <span>
      {text}(<u>{hotkey}</u>){more && "..."}
    </span>
    {arrow && (
      <MenuTail $split={split}>
        <MenuArrow />
      </MenuTail>
    )}
  </MenuItem>
);

const ContextMenu = () => (
  <Menu role='menu'>
    <MenuHead>
      <MenuIcon><PasteSmall /></MenuIcon>
      <b>粘贴选项:</b>
    </MenuHead>
    <PasteRow>
      {pasteOptions.map(([name, Icon]) => (
        <button key={name} aria-label={name}><Icon /></button>
      ))}
    </PasteRow>
    <MenuLine />
    <MenuRow icon={<LayoutIcon />} text='版式' hotkey='L' arrow />
    <MenuRow text='重设幻灯片' hotkey='R' />
    <MenuLine />
    <MenuRow icon={<GridIcon />} text='网格和参考线' hotkey='I' more arrow split />
    <MenuRow text='标尺' hotkey='R' />
    <MenuLine />
    <MenuRow icon={<BackdropIcon />} text='设置背景格式' hotkey='B' more />
    <MenuLine />
    <MenuRow icon={<NewCommentIcon />} text='新建批注' hotkey='M' />
    <ClickRing />
    <Cursor>
      <Svg w={13} h={20} c='#222'>
        <path d='M1 1v14.5l3.5-3.3 2.6 6 2.3-1-2.6-5.7h5z' fill='#fff' />
      </Svg>
    </Cursor>
  </Menu>
);

const StatusBar = () => {
  const [zoom, setZoom] = useState(108);
  return (
    <Status>
      <PageCount>幻灯片 第 1 张， 共 1 张</PageCount>
      <BookIcon />
      <span>中文(中国)</span>
      <StatusRight>
        <NotesButton><NotesIcon />备注</NotesButton>
        <ViewButton $on aria-label='普通视图'><NormalIcon /></ViewButton>
        <ViewButton aria-label='幻灯片浏览'><SorterIcon /></ViewButton>
        <ViewButton aria-label='阅读视图'><ReadIcon /></ViewButton>
        <ViewButton aria-label='幻灯片放映'><ShowIcon /></ViewButton>
        <ZoomStep aria-label='缩小'><Svg w={8} h={8}><path d='M0 4.5h8' /></Svg></ZoomStep>
        <Slider
          type='range'
          min='10'
          max='196'
          aria-label='缩放'
          value={zoom}
          onChange={(e) => setZoom(Number(e.target.value))}
        />
        <ZoomStep aria-label='放大'><Svg w={9} h={9}><path d='M0 4.5h9M4.5 0v9' /></Svg></ZoomStep>
        <Percent>{zoom}%</Percent>
        <FitButton aria-label='适应窗口'><FitIcon /></FitButton>
      </StatusRight>
    </Status>
  );
};

const TaskBar = () => (
  <Tasks>
    {tasks.map((t) => (
      <Task key={t.name} $open={t.open} $active={t.active} aria-label={t.name}>
        {typeof t.icon === "string" ? (
          <Tile $c={t.color} $bg={t.bg}>{t.icon}</Tile>
        ) : (
          t.icon
        )}
      </Task>
    ))}
    <Tray>
      <Weather>
        <SunIcon />
        <span>32°C</span>
        <span>晴朗</span>
      </Weather>
      <TrayItem><TrayUp /></TrayItem>
      <TrayItem><TrayMic /></TrayItem>
      <TrayItem><TrayBattery /></TrayItem>
      <TrayItem><TrayWechat /></TrayItem>
      <TrayItem><RecorderLogo size={16} /></TrayItem>
      <TrayItem><TrayVolume /></TrayItem>
      <TrayItem><TrayWifi /></TrayItem>
      <TrayItem>中</TrayItem>
      <TrayItem $wide><TrayQ /></TrayItem>
      <Clock>
        <span>15:14</span>
        <span>2021/6/22</span>
      </Clock>
      <TrayItem $wide><TrayNotice /></TrayItem>
    </Tray>
  </Tasks>
);

const App = () => (
  <Screen>
    <Reset />
    <TitleBar />
    <TabRow>
      {tabs.map((name) => (
        <Tab key={name} $on={name === "开始"}>{name}</Tab>
      ))}
      <TabActions>
        <ActionButton><ShareIcon />共享</ActionButton>
        <ActionButton><CommentIcon />批注</ActionButton>
      </TabActions>
    </TabRow>
    <Ribbon />
    <Work>
      <Thumbs>
        <span>1</span>
        <Thumb aria-label='幻灯片 1' />
      </Thumbs>
      <Editor>
        <Stage>
          <Slide />
        </Stage>
        <Notes placeholder='单击此处添加备注' aria-label='备注' />
      </Editor>
    </Work>
    <StatusBar />
    <TaskBar />
    <ContextMenu />
    <EdgeHandle />
    <Caption>我们选择第四个</Caption>
  </Screen>
);
export default App;

const Reset = createGlobalStyle`
  * {
    box-sizing: border-box;
  }

  body {
    margin: 0;
    overflow: hidden;
    font-family: "Noto Sans", "Noto Sans CJK SC", sans-serif;
    font-size: 12px;
    line-height: 15px;
    color: ${INK};
  }

  button, input, select, textarea {
    font: inherit;
    color: inherit;
    background: none;
    border: 0;
    padding: 0;
    margin: 0;
    outline: 0;
  }

  svg {
    display: block;
    flex: none;
  }
`;

const Screen = styled.div`
  position: relative;
  display: flex;
  flex-direction: column;
  height: 100vh;
  background: #e7e7e7;
`;

const TitleRow = styled.header`
  position: relative;
  display: grid;
  grid-template-columns: 787fr 366fr 767fr;
  align-items: center;
  height: 34px;
  padding-bottom: 2px;
  background: #c15128;
  color: #fff;
  white-space: nowrap;
`;

const PatternLayer = styled.div`
  position: absolute;
  top: 0;
  right: 8px;
`;

const TitleLeft = styled.div`
  display: flex;
  align-items: center;
  padding-left: 21px;
`;

const AutoSave = styled.label`
  display: flex;
  align-items: center;
  gap: 7px;
  margin-right: 8px;
`;

const Pill = styled.span`
  display: flex;
  align-items: center;
  justify-content: space-between;
  width: 38px;
  height: 16px;
  padding: 0 5px 0 3px;
  border: 1px solid #fff;
  border-radius: 8px;
  font-size: 10px;

  input {
    appearance: none;
    width: 8px;
    height: 8px;
    border-radius: 50%;
    background: #fff;
  }
`;

const BarButton = styled.button`
  display: flex;
  align-items: center;
  justify-content: center;
  gap: 4px;
  width: ${(p) => p.$w}px;
  height: 32px;
  ${(p) => p.$faint && "color: #e5764f;"}
`;

const FileName = styled.div`
  display: flex;
  flex: 1;
  align-items: center;
  justify-content: center;
  gap: 7px;
`;

const SearchBox = styled.label`
  display: flex;
  align-items: center;
  gap: 16px;
  height: 22px;
  padding-left: 19px;
  background: #ffcbb4;
  color: #8a2f16;

  input {
    flex: 1;
    min-width: 0;
  }
  input::placeholder {
    color: #7a2a14;
    opacity: 1;
  }
`;

const TitleRight = styled.div`
  position: relative;
  display: flex;
  align-items: center;
  justify-content: flex-end;
`;

const Avatar = styled.span`
  width: 24px;
  margin: 0 11px;
  border-radius: 50%;
  background: #03524c;
  color: #cfe6e2;
  font-size: 11px;
  line-height: 24px;
  text-align: center;
`;

const TabRow = styled.nav`
  display: flex;
  align-items: flex-start;
  gap: 27px;
  height: 34px;
  padding: 4px 12px 0 14px;
  background: #f3f2f1;
`;

const Tab = styled.button`
  height: 25px;
  padding-bottom: 2px;
  border-bottom: 3px solid transparent;
  font-size: 13px;
  line-height: 20px;
  white-space: nowrap;

  ${(p) =>
    p.$on &&
    css`
      border-color: #b0502c;
      font-weight: 700;
    `}
`;

const TabActions = styled.div`
  display: flex;
  gap: 9px;
  margin-left: auto;
`;

const ActionButton = styled.button`
  display: flex;
  align-items: center;
  justify-content: center;
  gap: 4px;
  width: 59px;
  height: 22px;
  background: #fff;
  border-radius: 2px;
  box-shadow: 0 0 2px #cfcdcb;
  color: ${BRAND};
  font-size: 13px;
  font-weight: 500;
`;

const RibbonRow = styled.section`
  position: relative;
  display: flex;
  height: 94px;
  padding-bottom: 4px;
  background: #f3f2f1;
  box-shadow: 0 1px 4px rgba(0, 0, 0, 0.3);
  white-space: nowrap;
`;

const Group = styled.div`
  display: flex;
  flex-direction: column;
  width: ${(p) => p.$width}px;
  border-right: 1px solid #b8b6b4;
`;

const GroupBody = styled.div`
  display: flex;
  flex: 1;
  align-items: flex-start;
  padding-left: ${(p) => p.$pad || 0}px;
  ${(p) => p.$center && "justify-content: center;"}
`;

const GroupFoot = styled.div`
  display: flex;
  align-items: center;
  height: 14px;

  span {
    flex: 1;
    text-align: center;
  }
`;

const Launcher = styled.button`
  width: 12px;
  margin-left: 4px;
  ${(p) => p.$dim && `color: ${DIM};`}
`;

const BigButton = styled.button`
  display: flex;
  flex-direction: column;
  align-items: center;
  width: ${(p) => (p.$w ? p.$w + "px" : "auto")};
  padding-top: 2px;
  color: ${(p) => (p.$dim ? DIM : INK)};

  span {
    display: flex;
    align-items: center;
    justify-content: center;
    gap: 4px;
    height: 15px;
  }
`;

const BigIcon = styled.div`
  display: flex;
  align-items: center;
  height: ${(p) => (p.$tall ? 39 : 35)}px;
  ${(p) => p.$tall && "padding-bottom: 8px;"}
`;

const Stack = styled.div`
  display: grid;
  grid-auto-rows: ${(p) => (p.$tight ? 23 : 24)}px;
  margin-top: -1px;
  ${(p) => p.$tight && "margin-left: 4px;"}
`;

const SmallButton = styled.button`
  display: flex;
  align-items: center;
  gap: 3px;
  color: ${(p) => (p.$dim ? DIM : INK)};

  span {
    margin-right: ${(p) => p.$gap || 1}px;
  }
`;

const Rows = styled.div`
  display: flex;
  flex-direction: column;
  gap: 8px;
  padding-top: 7px;
  ${(p) => p.$w && `width: ${p.$w}px;`}
`;

const ToolRow = styled.div`
  display: flex;
  align-items: center;
  height: 24px;
`;

const Tool = styled.button`
  display: flex;
  align-items: center;
  justify-content: center;
  gap: 5px;
  width: ${(p) => p.$w}px;
  height: 24px;
  color: #a3a19f;
  font-size: 13px;
`;

const SerifI = styled.i`
  font-family: "Liberation Serif", serif;
  font-size: 15px;
`;

const Shadowed = styled.b`
  text-shadow: 1px 1px 1px #999;
`;

const Split = styled.i`
  width: 1px;
  height: 22px;
  margin: 0 3px;
  background: #d2d0ce;
`;

const Combo = styled.div`
  display: flex;
  align-items: center;
  width: ${(p) => p.$w}px;
  height: 24px;
  margin-right: 2px;
  padding: 0 2px;
  background: #e1dfdd;
  border: 1px solid #c8c6c4;
  color: ${DIM};

  select {
    flex: 1;
    min-width: 0;
    appearance: none;
    opacity: 1;
    font-size: 13px;
  }
`;

const Gallery = styled.div`
  display: flex;
  margin: 2px 2px 0 0;
  border: 1px solid #c8c6c4;
  background: #fff;
`;

const ShapeGrid = styled.div`
  display: grid;
  grid-template-columns: repeat(6, 20px);
  grid-auto-rows: 20px;
`;

const GalleryScroll = styled.div`
  display: grid;
  width: 14px;
  border-left: 1px solid #c8c6c4;
  background: #f3f2f1;

  button {
    display: flex;
    align-items: center;
    justify-content: center;
  }
  button + button {
    border-top: 1px solid #aaa8a6;
  }
`;

const Collapse = styled.button`
  align-self: flex-end;
  margin-left: auto;
  padding: 0 9px 0 0;
`;

const Work = styled.main`
  display: flex;
  flex: 1;
  min-height: 0;
`;

const Thumbs = styled.aside`
  display: flex;
  align-items: flex-start;
  width: 303px;
  padding: 17px 20px 0 13px;
  border-right: 1px solid #bdbbb9;

  span {
    width: 21px;
    color: #c8674a;
    font-size: 15px;
    line-height: 14px;
  }
`;

const Thumb = styled.button`
  flex: 1;
  aspect-ratio: 248 / 143;
  background: #fff;
  border: 3px solid #ab5836;
`;

const Editor = styled.div`
  display: flex;
  flex: 1;
  flex-direction: column;
`;

const Stage = styled.div`
  display: flex;
  flex: 1;
  padding: 16px 128px 17px 114px;
`;

const Slide = styled.div`
  flex: 1;
  background: #fff;
  border: 1px solid #c6c6c6;
`;

const Notes = styled.textarea`
  height: 48px;
  margin-left: 2px;
  padding: 5px 9px;
  border-top: 1px solid #bdbbb9;
  font-size: 15px;
  line-height: 20px;
  resize: none;

  &::placeholder {
    color: #555;
    opacity: 1;
  }
`;

const Status = styled.footer`
  display: flex;
  align-items: center;
  gap: 18px;
  height: 22px;
  padding-left: 8px;
  background: #f3f2f1;
  border-top: 1px solid #c6c4c2;
  white-space: nowrap;
`;

const PageCount = styled.span`
  min-width: 131px;
`;

const StatusRight = styled.div`
  display: flex;
  align-items: center;
  height: 100%;
  margin-left: auto;
`;

const NotesButton = styled.button`
  display: flex;
  align-items: center;
  gap: 2px;
  margin-right: 19px;
`;

const ViewButton = styled.button`
  display: flex;
  align-items: center;
  justify-content: center;
  width: 40px;
  height: 21px;
  ${(p) => p.$on && "background: #d0cecc;"}
`;

const ZoomStep = styled.button`
  display: flex;
  justify-content: center;
  width: 18px;
`;

const Slider = styled.input`
  appearance: none;
  width: 100px;
  height: 12px;
  background: linear-gradient(#b5b3b1, #b5b3b1) center / 100% 1px no-repeat;

  &::-webkit-slider-thumb {
    appearance: none;
    width: 5px;
    height: 11px;
    background: #666;
  }
`;

const Percent = styled.span`
  width: 51px;
  text-align: center;
`;

const FitButton = styled.button`
  margin: 0 5px 0 2px;
`;

const Tasks = styled.div`
  display: flex;
  height: 40px;
  background: #1c1c1c;
  color: #fff;
  white-space: nowrap;
`;

const Task = styled.button`
  display: flex;
  align-items: center;
  justify-content: center;
  width: 49px;
  height: 40px;
  background: ${(p) => (p.$active ? "#3a3635" : "none")};

  ${(p) =>
    p.$open &&
    css`
      background-image: linear-gradient(#b5afb2, #b5afb2);
      background-size: ${p.$active ? "100%" : "40px"} 2px;
      background-position: bottom center;
      background-repeat: no-repeat;
    `}
`;

const Tile = styled.span`
  width: 22px;
  height: 21px;
  border: 1px solid ${(p) => p.$c};
  background: ${(p) => p.$bg};
  color: ${(p) => p.$c};
  font-size: 12px;
  font-weight: 500;
  line-height: 18px;
`;

const Tray = styled.div`
  display: flex;
  align-items: center;
  margin-left: auto;
  padding-right: 12px;
  border-right: 1px solid #666;
  margin-right: 4px;
`;

const Weather = styled.div`
  display: flex;
  align-items: center;
  gap: 10px;
  margin-right: 12px;
  font-size: 14px;
`;

const TrayItem = styled.button`
  display: flex;
  align-items: center;
  justify-content: center;
  width: ${(p) => (p.$wide ? 33 : 24)}px;
  height: 40px;
`;

const Clock = styled.div`
  display: flex;
  flex-direction: column;
  align-items: center;
  gap: 4px;
  width: 76px;
`;

const Menu = styled.div`
  position: absolute;
  top: 333px;
  left: 834px;
  width: 186px;
  padding-bottom: 2px;
  background: #fff;
  border: 1px solid #c6c6c6;
  box-shadow: 1px 2px 4px rgba(0, 0, 0, 0.15);
  color: #262626;
  white-space: nowrap;
`;

const MenuHead = styled.div`
  display: flex;
  align-items: flex-start;
  height: 36px;
  padding-top: 6px;

  b {
    line-height: 22px;
  }
`;

const MenuIcon = styled.span`
  display: flex;
  justify-content: center;
  width: 38px;
  padding-left: 4px;
  color: #555;
`;

const PasteRow = styled.div`
  display: flex;
  gap: 9px;
  height: 31px;
  padding-left: 39px;
  align-items: flex-start;
`;

const MenuLine = styled.hr`
  margin: 0 2px 0 33px;
  border: 0;
  border-top: 1px solid #e1e1e1;
`;

const MenuItem = styled.button`
  display: flex;
  align-items: center;
  width: 100%;
  height: 31px;
`;

const MenuTail = styled.i`
  display: flex;
  margin-left: auto;
  margin-right: 8px;
  padding-left: 9px;
  ${(p) => p.$split && "border-left: 1px solid #e1e1e1;"}
`;

const ClickRing = styled.div`
  position: absolute;
  top: -17px;
  left: 23px;
  width: 64px;
  height: 64px;
  border: 6px solid rgba(247, 160, 118, 0.8);
  border-radius: 50%;
`;

const Cursor = styled.div`
  position: absolute;
  top: 16px;
  left: 55px;
`;

const EdgeHandle = styled.div`
  position: absolute;
  top: 10px;
  right: 0;
  width: 7px;
  height: 70px;
  background: #3c4150;
`;

const Caption = styled.div`
  position: absolute;
  bottom: 49px;
  left: 50%;
  transform: translateX(-50%);
  padding: 0 10px 10px;
  background: #fff;
  color: #000;
  font-family: "Noto Serif CJK SC", "Noto Sans CJK SC", sans-serif;
  font-size: 63px;
  font-weight: 700;
  line-height: 68px;
  white-space: nowrap;
`;
